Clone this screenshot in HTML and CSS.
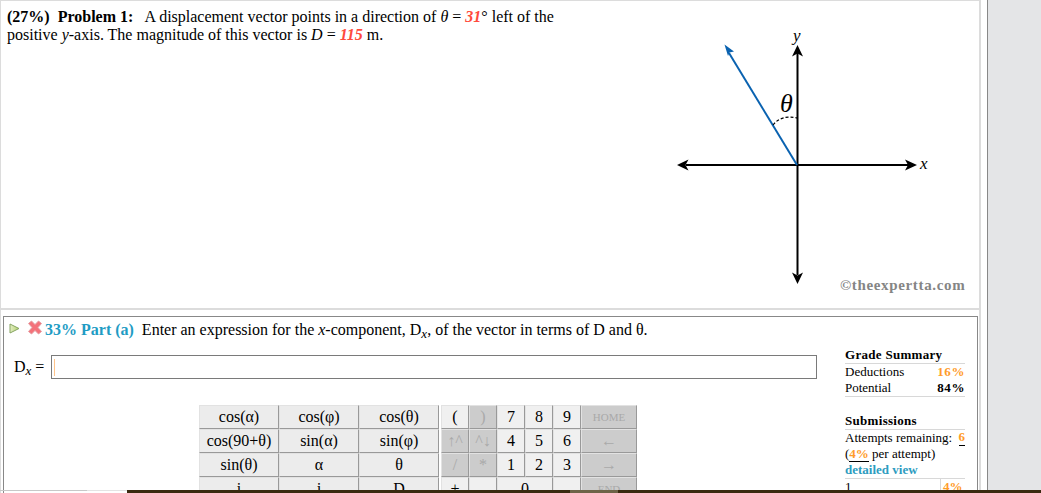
FILE: index.html
```html
<!DOCTYPE html>
<html lang="en">
<head>
<meta charset="utf-8">
<title>Problem 1</title>
<link rel="stylesheet" href="styles.css">
</head>
<body>
<div class="page">
  <main class="sheet">
    <section class="problem">
      <p class="statement"><b>(27%)&nbsp; Problem 1:</b> &nbsp; A displacement vector points in a direction of <i>θ</i> = <i class="val">31</i>° left of the<br>positive <i>y</i>-axis. The magnitude of this vector is <i>D</i> = <i class="val">115</i> m.</p>
      <div class="figure">
        <svg class="diagram" viewBox="0 0 330 290" width="330" height="290" aria-hidden="true">
          <line x1="137.5" y1="33" x2="137.5" y2="255" stroke="#000" stroke-width="2"/>
          <path d="M137.500 25L143 36.500L137.500 33.500L132 36.500Z" fill="#000"/>
          <path d="M137.500 264L143 252.500L137.500 255.500L132 252.500Z" fill="#000"/>
          <line x1="26" y1="145" x2="248" y2="145" stroke="#000" stroke-width="2"/>
          <path d="M17 145L28.500 139.500L25.500 145L28.500 150.500Z" fill="#000"/>
          <path d="M257 145L245 139.500L248 145L245 150.500Z" fill="#000"/>
          <line x1="137" y1="145" x2="69" y2="33" stroke="#0a62b0" stroke-width="2"/>
          <path d="M64.500 24.500L74 31.500L69.500 32.500L68 36Z" fill="#0a62b0"/>
          <path d="M113 105Q121 94.500 137.500 98" fill="none" stroke="#000" stroke-width="1.200" stroke-dasharray="3 2"/>
          <text class="theta" x="120" y="92">θ</text>
          <text class="axis" x="133" y="21">y</text>
          <text class="axis" x="260" y="149">x</text>
        </svg>
        <span class="credit">©theexpertta.com</span>
      </div>
    </section>
    <section class="part">
      <header class="part-head">
        <svg class="play" viewBox="0 0 11 11" width="11" height="11" aria-hidden="true">
          <defs>
            <linearGradient id="playfill" x1="0" y1="0" x2="1" y2="0">
              <stop offset="0" stop-color="#e4eec4"/>
              <stop offset="1" stop-color="#b4d070"/>
            </linearGradient>
          </defs>
          <path d="M1 1L10 5.500L1 10Z" fill="url(#playfill)" stroke="#86a562"/>
        </svg>
        <svg class="cross" viewBox="0 0 14 15" width="14" height="15" aria-hidden="true"><path d="M3.500 1L7 4.500L10.500 1L13.500 3.500L10 7.500L13.500 11.500L10.500 14L7 10.500L3.500 14L.5 11.500L4 7.500L.5 3.500Z" fill="#f4727a" stroke="#e4a0a4"/></svg>
        <b class="part-title">33% Part (a)</b>
        <span class="part-text">Enter an expression for the <i>x</i>-component, D<sub><i>x</i></sub>, of the vector in terms of D and θ.</span>
      </header>
      <div class="part-body">
        <div class="work">
          <div class="answer">
            <span class="answer-label">D<sub><i>x</i></sub> =</span>
            <div class="field"><span class="caret"></span></div>
          </div>
          <div class="keypad">
            <div class="keys-fn">
              <span class="key">cos(α)</span><span class="key">cos(φ)</span><span class="key">cos(θ)</span>
              <span class="key">cos(90+θ)</span><span class="key">sin(α)</span><span class="key">sin(φ)</span>
              <span class="key">sin(θ)</span><span class="key">α</span><span class="key">θ</span>
              <span class="key">i</span><span class="key">j</span><span class="key">D</span>
            </div>
            <div class="keys-num">
              <span class="key lit">(</span><span class="key off">)</span><span class="key lit">7</span><span class="key lit">8</span><span class="key lit">9</span><span class="key off small">HOME</span>
              <span class="key off">↑^</span><span class="key off">^↓</span><span class="key lit">4</span><span class="key lit">5</span><span class="key lit">6</span><span class="key off">←</span>
              <span class="key off">/</span><span class="key off">*</span><span class="key lit">1</span><span class="key lit">2</span><span class="key lit">3</span><span class="key off">→</span>
              <span class="key lit">+</span><span class="key lit"></span><span class="key lit wide">0</span><span class="key lit"></span><span class="key off small">END</span>
            </div>
          </div>
        </div>
        <aside class="summary">
          <h3 class="sum-title">Grade Summary</h3>
          <div class="sum-rows">
            <div class="sum-row"><span>Deductions</span><b class="orange pct">16%</b></div>
            <div class="sum-row"><span>Potential</span><b class="pct">84%</b></div>
          </div>
          <h3 class="sum-title second">Submissions</h3>
          <div class="subs">
            <div class="sum-row"><span>Attempts remaining:</span><b class="orange under">6</b></div>
            <div>(<b class="orange under">4%</b> per attempt)</div>
            <b class="detail">detailed view</b>
          </div>
          <div class="sum-row"><span>1</span><b class="orange cell">4%</b></div>
        </aside>
      </div>
    </section>
  </main>
  <div class="gutter"></div>
</div>
<div class="bottom-bar">
  <span class="bar-grey"></span><span class="bar-pale"></span><span class="bar-dark"></span><span class="bar-light"></span><span class="bar-dark fill"></span>
</div>
</body>
</html>
```
FILE: styles.css
```css
* { box-sizing: border-box; }
html, body { margin: 0; height: 493px; overflow: hidden; background: #fff; }
body { font-family: "Liberation Serif", "Times New Roman", serif; font-size: 16px; color: #000; position: relative; }
.page { display: flex; height: 493px; }
.sheet { width: 981px; border: 1px solid #dcdcdc; border-right-width: 2px; height: 520px; flex: none; }
.gutter { flex: 1; background: #e4e5e7; border-left: 1px solid #888; margin-left: 6px; }
.problem { height: 309px; border-bottom: 2px solid #dcdcdc; position: relative; padding: 7px 6px; }
.statement { margin: 0; font-size: 16px; line-height: 18px; }
.val { color: #ff4a3c; font-weight: bold; }
.figure { position: absolute; left: 659px; top: 19px; width: 320px; height: 290px; }
.diagram { display: block; overflow: visible; }
.theta { font: italic 26px "Liberation Serif", serif; }
.axis { font: italic 17px "Liberation Serif", serif; }
.credit { position: absolute; left: 180px; top: 257px; font-size: 15px; font-weight: bold; color: #858585; letter-spacing: .65px; white-space: nowrap; }
.part { margin: 6px 0 0 2px; width: 975px; border: 1px solid #888; height: 200px; }
.part-head { display: flex; align-items: center; height: 26px; padding: 0 0 0 5px; white-space: nowrap; }
.play { margin-right: 8px; margin-top: -4px; }
.cross { margin-right: 3px; margin-top: -5px; }
.part-title { color: #1f9cc4; font-size: 16px; margin-right: 8px; }
.part-text { font-size: 16px; }
sub { font-size: 13px; line-height: 0; vertical-align: -3px; }
.part-body { display: flex; }
.work { width: 840px; flex: none; }
.answer { display: flex; align-items: center; height: 24px; margin: 12px 0 0 10px; }
.answer-label { width: 37px; font-size: 16px; }
.field { width: 766px; height: 24px; border: 1px solid #7a7a7a; display: flex; align-items: center; padding-left: 2px; }
.caret { width: 1px; height: 17px; background: #ffc48a; }
.keypad { display: flex; gap: 2px; margin: 26px 0 0 195px; }
.keys-fn { display: grid; grid-template-columns: repeat(3, 80px); grid-auto-rows: 24px; }
.keys-num { display: grid; grid-template-columns: 28px 28px 28px 28px 28px 56px; grid-auto-rows: 24px; }
.key { display: flex; align-items: center; justify-content: center; background: #ececec; border-style: solid; border-width: 1px; border-color: #e2e2e2 #999 #999 #e2e2e2; font-size: 16px; }
.lit { background: #f0f0f0; font-size: 16px; }
.off { background: #ccc; color: #a9a9a9; font-size: 16px; }
.small { font-size: 11px; }
.wide { grid-column: span 2; }
.summary { width: 120px; margin-left: 1px; font-size: 13px; line-height: 16px; margin-top: 4px; }
.sum-title { margin: 0; font-size: 13px; line-height: 16px; letter-spacing: .3px; border-bottom: 1px solid #d8d8d8; }
.second { margin-top: 16px; }
.sum-rows { border-bottom: 1px solid #d8d8d8; }
.sum-row { display: flex; justify-content: space-between; }
.pct { letter-spacing: .6px; }
.orange { color: #ff9c2a; }
.under { border-bottom: 1px solid #000; line-height: 14px; display: inline-block; }
.subs { border-bottom: 1px solid #d8d8d8; }
.detail { color: #2d9cc0; display: block; }
.cell { width: 25px; border-left: 1px solid #d8d8d8; padding-left: 2px; }
.bottom-bar { position: absolute; left: 0; right: 0; top: 490px; height: 3px; display: flex; }
.bar-grey { width: 87px; height: 1px; background: #c8c8c8; }
.bar-pale { width: 40px; height: 1px; background: #e4e4e4; }
.bar-dark { width: 443px; background: #3a2a10; }
.bar-light { width: 48px; background: #6e6448; }
.fill { flex: 1; }
```
